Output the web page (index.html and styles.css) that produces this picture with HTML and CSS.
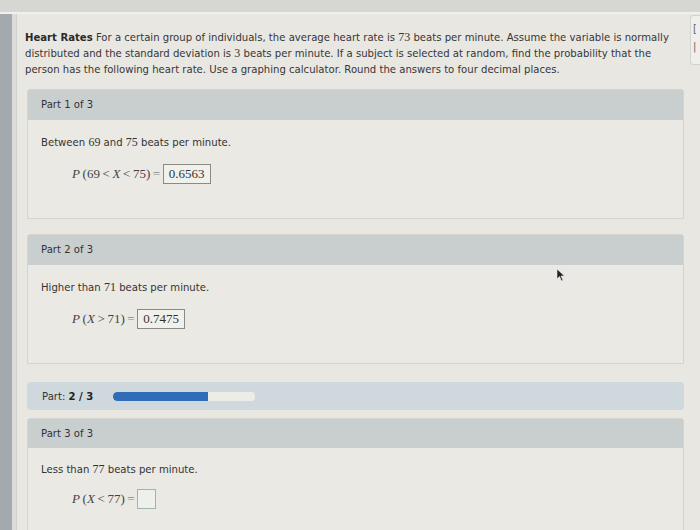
FILE: index.html
```html
<!DOCTYPE html>
<html>
<head>
<meta charset="utf-8">
<link rel="stylesheet" href="styles.css">
</head>
<body>
<div class="topbar"></div>
<div class="frame">
  <div class="leftbar"></div>
  <div class="leftgap"></div>
  <div class="main">
    <p class="intro"><b>Heart Rates</b> For a certain group of individuals, the average heart rate is <span class="num">73</span> beats per minute. Assume the variable is normally distributed and the standard deviation is <span class="num">3</span> beats per minute. If a subject is selected at random, find the probability that the person has the following heart rate. Use a graphing calculator. Round the answers to four decimal places.</p>

    <section class="part">
      <div class="part-head">Part 1 of 3</div>
      <div class="part-body">
        <p class="q">Between <span class="num">69</span> and <span class="num">75</span> beats per minute.</p>
        <div class="math"><i>P</i>&thinsp;(69&thinsp;&lt;&thinsp;<i>X</i>&thinsp;&lt;&thinsp;75)&thinsp;<span class="eq">=</span>&thinsp;<span class="ans">0.6563</span></div>
      </div>
    </section>

    <section class="part p2">
      <div class="part-head">Part 2 of 3</div>
      <div class="part-body">
        <p class="q">Higher than <span class="num">71</span> beats per minute.</p>
        <div class="math"><i>P</i>&thinsp;(<i>X</i>&thinsp;&gt;&thinsp;71)&thinsp;<span class="eq">=</span>&thinsp;<span class="ans">0.7475</span></div>
        <svg class="cursor" width="10" height="14" viewBox="0 0 10 14"><path d="M1 1 L1 11 L3.5 8.5 L5.5 13 L7 12.3 L5 8 L8.5 8 Z" fill="#222" stroke="#eee" stroke-width="0.6"/></svg>
      </div>
    </section>

    <div class="progress-row">
      <span class="plabel">Part: <b>2 / 3</b></span>
      <div class="track"><div class="fill" style="width:66.7%"></div></div>
    </div>

    <section class="part p3">
      <div class="part-head">Part 3 of 3</div>
      <div class="part-body">
        <p class="q">Less than <span class="num">77</span> beats per minute.</p>
        <div class="math"><i>P</i>&thinsp;(<i>X</i>&thinsp;&lt;&thinsp;77)&thinsp;<span class="eq">=</span>&thinsp;<span class="ans empty"></span></div>
      </div>
    </section>
  </div>
  <div class="side">
    <div class="sidebox"><span>[</span><span>|</span></div>
  </div>
</div>
</body>
</html>
```

FILE: styles.css
```css
html, body {
  margin: 0;
  padding: 0;
  background: #e9e7e2;
  font-family: "DejaVu Sans", Verdana, sans-serif;
  color: #333;
  overflow: hidden;
  height: 530px;
}
.topbar {
  height: 12px;
  background: #d6d7d3;
  border-bottom: 2px solid #f1f0ec;
}
.frame {
  display: flex;
  height: 516px;
  overflow: hidden;
}
.leftbar {
  width: 12px;
  background: #a2aaad;
  flex: none;
}
.leftgap {
  width: 4px;
  background: #dddcd8;
  border-right: 1px solid #d2d2ce;
  flex: none;
}
.main {
  flex: 1;
  padding: 16px 6px 0 8px;
  min-width: 0;
}
.intro {
  margin: 0 0 11px 0;
  font-size: 10.1px;
  line-height: 16px;
  color: #363636;
}
.intro b { color: #2a2a2a; }
.num {
  font-family: "Liberation Serif", "Times New Roman", serif;
  font-size: 12px;
  line-height: 1;
}
.part {
  margin-left: 2px;
  border: 1px solid #d3d3cf;
  border-radius: 3px 3px 0 0;
  background: #ebe9e4;
}
.part-head {
  height: 30px;
  background: #c9cfce;
  font-size: 10.1px;
  line-height: 30px;
  padding-left: 13px;
  color: #333;
}
.part-body {
  height: 98px;
  padding: 16px 0 0 13px;
  box-sizing: border-box;
  position: relative;
}
.q {
  margin: 0;
  font-size: 10.1px;
  line-height: 14px;
  color: #333;
}
.math {
  margin: 14px 0 0 31px;
  font-family: "Liberation Serif", "Times New Roman", serif;
  font-size: 13px;
  color: #444;
  display: flex;
  align-items: center;
  height: 20px;
}
.eq { color: #888; }
.ans {
  display: inline-block;
  border: 1px solid #8a8a86;
  padding: 0 5px;
  height: 18px;
  line-height: 18px;
  background: #f1f1ec;
  color: #333;
}
.ans.empty {
  width: 17px;
  padding: 0;
  border-color: #9fb4b0;
  background: #eef0ec;
}
.p2 { margin-top: 15px; }
.cursor {
  position: absolute;
  left: 528px;
  top: 3px;
}
.progress-row {
  margin: 18px 0 0 2px;
  height: 28px;
  background: #cfd8dc;
  border-radius: 4px;
  display: flex;
  align-items: center;
  padding-left: 15px;
  font-size: 10.1px;
}
.plabel { width: 71px; }
.plabel b { color: #222; }
.track {
  width: 142px;
  height: 9px;
  background: #eeece7;
  border-radius: 4px;
  overflow: hidden;
}
.fill {
  height: 100%;
  background: #2f6db8;
  border-radius: 4px 0 0 4px;
}
.p3 { margin-top: 8px; }
.p3 .part-head { height: 29px; line-height: 29px; }
.p3 .part-body { padding-top: 15px; height: 120px; }
.p3 .math { margin-top: 12px; }
.side {
  width: 10px;
  flex: none;
  padding-top: 1px;
}
.sidebox {
  height: 50px;
  background: #f0efeb;
  border: 1px solid #d2d2ce;
  border-right: none;
  border-radius: 3px 0 0 3px;
  display: flex;
  flex-direction: column;
  font-size: 10px;
  color: #666;
  padding: 8px 0 0 2px;
  box-sizing: border-box;
  gap: 8px;
  line-height: 10px;
}
```
